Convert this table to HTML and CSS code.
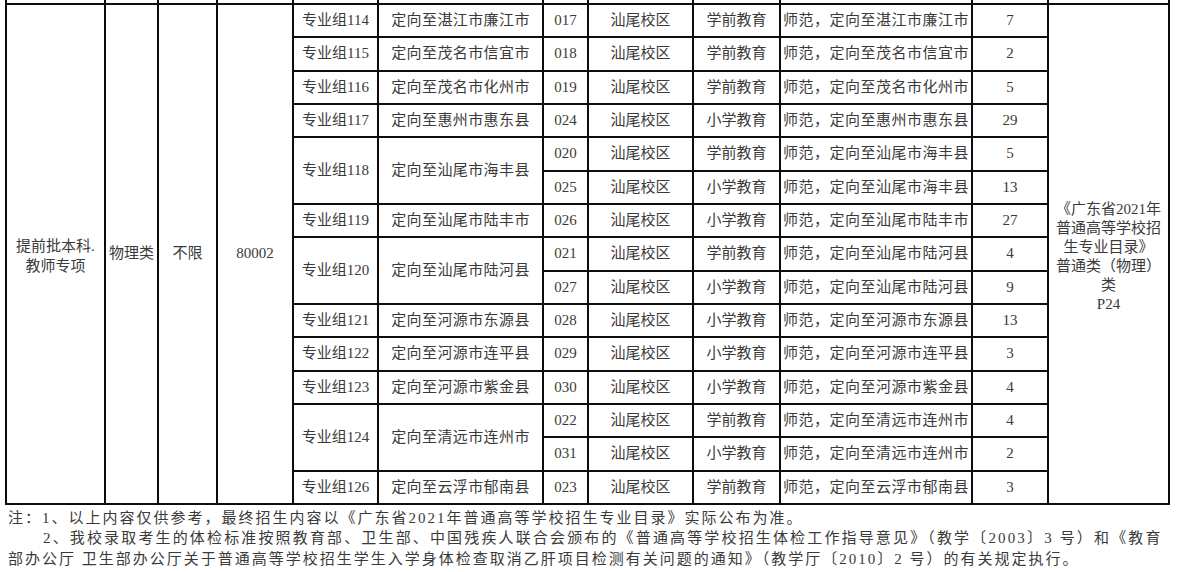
FILE: index.html
```html
<!DOCTYPE html>
<html lang="zh-CN">
<head>
<meta charset="utf-8">
<title>专业组</title>
<link rel="stylesheet" href="styles.css">
</head>
<body>
<div class="sheet">
<table class="grid">
<colgroup>
<col class="c1"><col class="c2"><col class="c3"><col class="c4"><col class="c5"><col class="c6"><col class="c7"><col class="c8"><col class="c9"><col class="c10"><col class="c11"><col class="c12">
</colgroup>
<tr class="cut"><td></td><td></td><td></td><td></td><td></td><td></td><td></td><td></td><td></td><td></td><td></td><td></td></tr>
<tr class="r">
<td rowspan="15" class="batch">提前批本科.<br>教师专项</td>
<td rowspan="15">物理类</td>
<td rowspan="15">不限</td>
<td rowspan="15">80002</td>
<td>专业组114</td><td class="sp">定向至湛江市廉江市</td><td>017</td><td>汕尾校区</td><td>学前教育</td><td class="note">师范，定向至湛江市廉江市</td><td>7</td>
<td rowspan="15" class="ref">《广东省2021年<br>普通高等学校招<br>生专业目录》<br>普通类（物理）<br>类<br>P24</td>
</tr>
<tr class="r"><td>专业组115</td><td class="sp">定向至茂名市信宜市</td><td>018</td><td>汕尾校区</td><td>学前教育</td><td class="note">师范，定向至茂名市信宜市</td><td>2</td></tr>
<tr class="r"><td>专业组116</td><td class="sp">定向至茂名市化州市</td><td>019</td><td>汕尾校区</td><td>学前教育</td><td class="note">师范，定向至茂名市化州市</td><td>5</td></tr>
<tr class="r"><td>专业组117</td><td class="sp">定向至惠州市惠东县</td><td>024</td><td>汕尾校区</td><td>小学教育</td><td class="note">师范，定向至惠州市惠东县</td><td>29</td></tr>
<tr class="r"><td rowspan="2">专业组118</td><td rowspan="2" class="sp">定向至汕尾市海丰县</td><td>020</td><td>汕尾校区</td><td>学前教育</td><td class="note">师范，定向至汕尾市海丰县</td><td>5</td></tr>
<tr class="r"><td>025</td><td>汕尾校区</td><td>小学教育</td><td class="note">师范，定向至汕尾市海丰县</td><td>13</td></tr>
<tr class="r"><td>专业组119</td><td class="sp">定向至汕尾市陆丰市</td><td>026</td><td>汕尾校区</td><td>小学教育</td><td class="note">师范，定向至汕尾市陆丰市</td><td>27</td></tr>
<tr class="r"><td rowspan="2">专业组120</td><td rowspan="2" class="sp">定向至汕尾市陆河县</td><td>021</td><td>汕尾校区</td><td>学前教育</td><td class="note">师范，定向至汕尾市陆河县</td><td>4</td></tr>
<tr class="r"><td>027</td><td>汕尾校区</td><td>小学教育</td><td class="note">师范，定向至汕尾市陆河县</td><td>9</td></tr>
<tr class="r"><td>专业组121</td><td class="sp">定向至河源市东源县</td><td>028</td><td>汕尾校区</td><td>小学教育</td><td class="note">师范，定向至河源市东源县</td><td>13</td></tr>
<tr class="r"><td>专业组122</td><td class="sp">定向至河源市连平县</td><td>029</td><td>汕尾校区</td><td>小学教育</td><td class="note">师范，定向至河源市连平县</td><td>3</td></tr>
<tr class="r"><td>专业组123</td><td class="sp">定向至河源市紫金县</td><td>030</td><td>汕尾校区</td><td>小学教育</td><td class="note">师范，定向至河源市紫金县</td><td>4</td></tr>
<tr class="r"><td rowspan="2">专业组124</td><td rowspan="2" class="sp">定向至清远市连州市</td><td>022</td><td>汕尾校区</td><td>学前教育</td><td class="note">师范，定向至清远市连州市</td><td>4</td></tr>
<tr class="r"><td>031</td><td>汕尾校区</td><td>小学教育</td><td class="note">师范，定向至清远市连州市</td><td>2</td></tr>
<tr class="r"><td>专业组126</td><td class="sp">定向至云浮市郁南县</td><td>023</td><td>汕尾校区</td><td>学前教育</td><td class="note">师范，定向至云浮市郁南县</td><td>3</td></tr>
</table>
<div class="notes">
<div class="line">注：1、以上内容仅供参考，最终招生内容以《广东省2021年普通高等学校招生专业目录》实际公布为准。</div>
<div class="line indent">2、我校录取考生的体检标准按照教育部、卫生部、中国残疾人联合会颁布的《普通高等学校招生体检工作指导意见》（教学〔2003〕3 号）和《教育</div>
<div class="line">部办公厅 卫生部办公厅关于普通高等学校招生学生入学身体检查取消乙肝项目检测有关问题的通知》（教学厅〔2010〕2 号）的有关规定执行。</div>
</div>
</div>
</body>
</html>
```

FILE: styles.css
```css
html, body {
  margin: 0;
  padding: 0;
  background: #ffffff;
}

body {
  font-family: "Liberation Serif", "Noto Sans CJK SC", serif;
  color: #3a3a3a;
}

.sheet {
  width: 1180px;
  height: 572px;
  overflow: hidden;
  padding-left: 5px;
  box-sizing: border-box;
}

.grid {
  border-collapse: collapse;
  table-layout: fixed;
  width: 1165px;
  margin-top: -7px;
  font-size: 15px;
}

.c1 { width: 99px; }
.c2 { width: 53px; }
.c3 { width: 59px; }
.c4 { width: 76px; }
.c5 { width: 85px; }
.c6 { width: 165px; }
.c7 { width: 45px; }
.c8 { width: 105px; }
.c9 { width: 87px; }
.c10 { width: 192px; }
.c11 { width: 76px; }
.c12 { width: 121px; }

.grid td {
  border: 2px solid #0d0d0d;
  padding: 0;
  text-align: center;
  vertical-align: middle;
  line-height: 19px;
  white-space: nowrap;
  overflow: hidden;
}

.grid tr.cut td {
  border-top: none;
  height: 10px;
}

.grid tr.r {
  height: 33.333px;
}

.grid td.sp {
  letter-spacing: 0.4px;
}

.grid td.note {
  text-align: left;
  padding-left: 2px;
  letter-spacing: 0.5px;
}

.grid td.batch {
  line-height: 20px;
  padding-top: 4px;
}

.grid td.ref {
  line-height: 19px;
  padding-top: 6px;
}

.notes {
  margin-top: 3px;
  padding-left: 3px;
  font-size: 15px;
  line-height: 20.5px;
  letter-spacing: 2px;
}

.line {
  white-space: nowrap;
}

.indent {
  padding-left: 35px;
  letter-spacing: 2.15px;
}
```
